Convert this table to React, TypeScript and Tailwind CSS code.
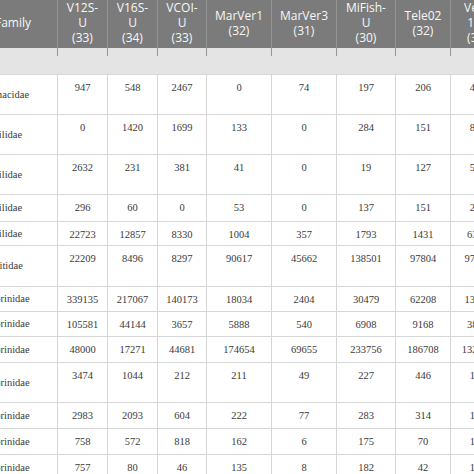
import React from "react";

const headers: string[][] = [
  ["V12S-", "U", "(33)"],
  ["V16S-", "U", "(34)"],
  ["VCOI-", "U", "(33)"],
  ["MarVer1", "(32)"],
  ["MarVer3", "(31)"],
  ["MiFish-", "U", "(30)"],
  ["Tele02", "(32)"],
  ["Vert-", "16S", "(33)"],
];

type Row = { family: string; pad: string; h: string; values: string[] };

const rows: Row[] = [
  { family: "Pomacidae", pad: "pl-[23px]", h: "h-[40px]", values: ["947", "548", "2467", "0", "74", "197", "206", "412"] },
  { family: "Mugilidae", pad: "pl-[19px]", h: "h-[40px]", values: ["0", "1420", "1699", "133", "0", "284", "151", "836"] },
  { family: "Mugilidae", pad: "pl-[19px]", h: "h-[40px]", values: ["2632", "231", "381", "41", "0", "19", "127", "528"] },
  { family: "Mugilidae", pad: "pl-[19px]", h: "h-[27px]", values: ["296", "60", "0", "53", "0", "137", "151", "254"] },
  { family: "Mugilidae", pad: "pl-[19px]", h: "h-[24px]", values: ["22723", "12857", "8330", "1004", "357", "1793", "1431", "6342"] },
  { family: "Cobitidae", pad: "pl-[22px]", h: "h-[41px]", values: ["22209", "8496", "8297", "90617", "45662", "138501", "97804", "97527"] },
  { family: "Cyprinidae", pad: "pl-[23px]", h: "h-[25px]", values: ["339135", "217067", "140173", "18034", "2404", "30479", "62208", "13768"] },
  { family: "Cyprinidae", pad: "pl-[23px]", h: "h-[25px]", values: ["105581", "44144", "3657", "5888", "540", "6908", "9168", "3852"] },
  { family: "Cyprinidae", pad: "pl-[23px]", h: "h-[26px]", values: ["48000", "17271", "44681", "174654", "69655", "233756", "186708", "132604"] },
  { family: "Cyprinidae", pad: "pl-[23px]", h: "h-[40px]", values: ["3474", "1044", "212", "211", "49", "227", "446", "132"] },
  { family: "Cyprinidae", pad: "pl-[23px]", h: "h-[26px]", values: ["2983", "2093", "604", "222", "77", "283", "314", "186"] },
  { family: "Cyprinidae", pad: "pl-[23px]", h: "h-[26px]", values: ["758", "572", "818", "162", "6", "175", "70", "117"] },
  { family: "Cyprinidae", pad: "pl-[23px]", h: "h-[26px]", values: ["757", "80", "46", "135", "8", "182", "42", "142"] },
];

const grid = "grid grid-cols-[98px_50px_50px_49px_65px_65px_59px_55px_54px]";

export default function App() {
  return (
    <div className="w-[474px] h-[474px] overflow-hidden bg-white">
      <div className="ml-[-40px] w-[545px]">
        {/* header */}
        <div
          className={`${grid} h-[48px] bg-[#7b7b7b] text-[#f7f7f7] text-[12px] leading-[15px]`}
          style={{ fontFamily: '"Open Sans", "Noto Sans", sans-serif' }}
        >
          <div className="flex items-center pb-[11px] pl-[35px] border-r border-[#959595]">Family</div>
          {headers.map((h, i) => (
            <div
              key={i}
              className="flex flex-col items-center justify-center pb-[11px] text-center border-r border-[#959595] whitespace-nowrap"
            >
              {h.map((l, j) => (
                <span key={j}>{l}</span>
              ))}
            </div>
          ))}
        </div>
        {/* band */}
        <div className="h-[27px] bg-[#e4e4e4] border-b border-[#d6d6d6]" />
        {/* data */}
        <div
          className="text-[10.5px] leading-[14px] text-[#3a3a3a]"
          style={{ fontFamily: '"Liberation Serif", "DejaVu Serif", serif' }}
        >
          {rows.map((r, i) => (
            <div key={i} className={`${grid} ${r.h}`}>
              <div
                className={`flex items-center ${r.pad} border-r border-b border-[#d6d6d6] whitespace-nowrap overflow-hidden`}
              >
                {r.family}
              </div>
              {r.values.map((v, j) => (
                <div
                  key={j}
                  className="pt-[6px] text-center border-r border-b border-[#d6d6d6] whitespace-nowrap"
                >
                  {v}
                </div>
              ))}
            </div>
          ))}
        </div>
      </div>
    </div>
  );
}
